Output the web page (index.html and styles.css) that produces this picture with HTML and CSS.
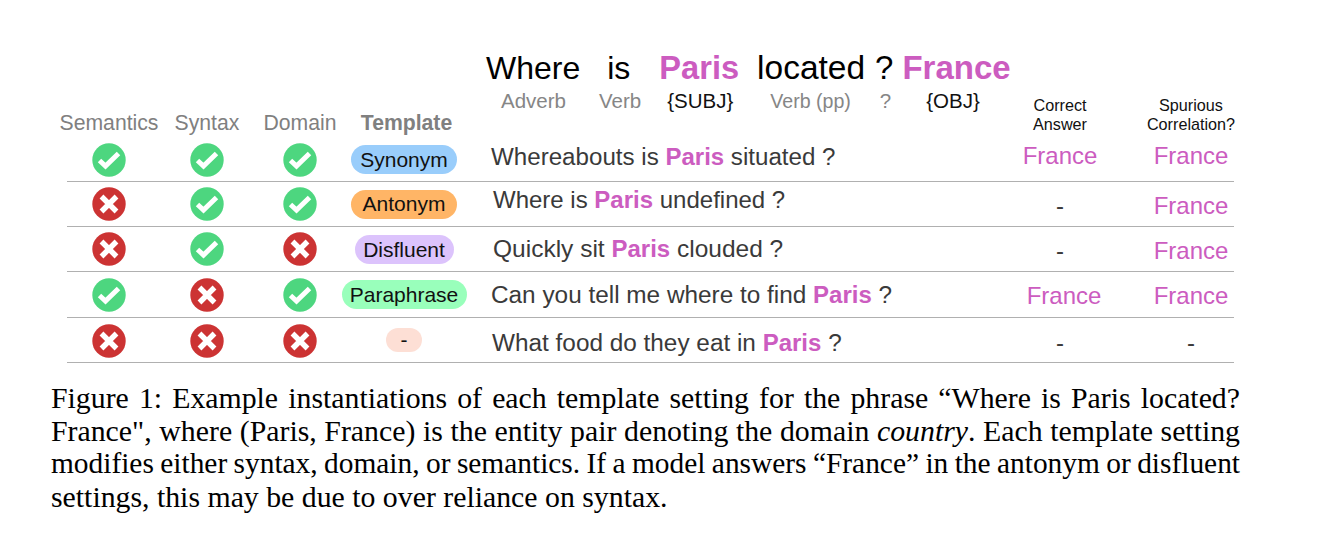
FILE: index.html
```html
<!DOCTYPE html>
<html lang="en">
<head>
<meta charset="utf-8">
<title>Figure 1</title>
<link rel="stylesheet" href="styles.css">
</head>
<body>
<svg class="defs" width="0" height="0" aria-hidden="true">
  <symbol id="yes" viewBox="0 0 34 34"><circle cx="17" cy="17" r="16.7" fill="#4dd67f"/><path d="M7.5 17.5l6 5.5L26.5 10.5" fill="none" stroke="#fff" stroke-width="5"/></symbol>
  <symbol id="no" viewBox="0 0 34 34"><circle cx="17" cy="17" r="16.7" fill="#cc3333"/><path d="M9.5 9.5l15 15M24.5 9.5l-15 15" fill="none" stroke="#fff" stroke-width="5.4"/></symbol>
</svg>
<main class="page">
  <figure class="figure">
    <div class="headline">
      <span class="w-where">Where</span>
      <span class="w-is">is</span>
      <b class="hl w-paris">Paris</b>
      <span class="w-located">located</span>
      <span class="w-q">?</span>
      <b class="hl w-france">France</b>
    </div>
    <div class="row head">
      <div class="label">Semantics</div>
      <div class="label">Syntax</div>
      <div class="label">Domain</div>
      <div class="label strong">Template</div>
      <div class="parts">
        <span class="p-adverb">Adverb</span>
        <span class="p-verb">Verb</span>
        <span class="p-subj dark">{SUBJ}</span>
        <span class="p-pp">Verb (pp)</span>
        <span class="p-q">?</span>
        <span class="p-obj dark">{OBJ}</span>
      </div>
      <div class="small">Correct<br>Answer</div>
      <div class="small">Spurious<br>Correlation?</div>
    </div>

    <div class="row r1">
      <svg class="ico"><use href="#yes"/></svg>
      <svg class="ico"><use href="#yes"/></svg>
      <svg class="ico"><use href="#yes"/></svg>
      <span class="pill blue">Synonym</span>
      <div class="sent">Whereabouts is <b class="hl">Paris</b> situated ?</div>
      <div class="ans hl2">France</div>
      <div class="ans hl2">France</div>
    </div>
    <div class="row r2">
      <svg class="ico"><use href="#no"/></svg>
      <svg class="ico"><use href="#yes"/></svg>
      <svg class="ico"><use href="#yes"/></svg>
      <span class="pill orange">Antonym</span>
      <div class="sent">Where is <b class="hl">Paris</b> undefined ?</div>
      <div class="ans">-</div>
      <div class="ans hl2">France</div>
    </div>
    <div class="row r3">
      <svg class="ico"><use href="#no"/></svg>
      <svg class="ico"><use href="#yes"/></svg>
      <svg class="ico"><use href="#no"/></svg>
      <span class="pill purple">Disfluent</span>
      <div class="sent">Quickly sit <b class="hl">Paris</b> clouded ?</div>
      <div class="ans">-</div>
      <div class="ans hl2">France</div>
    </div>
    <div class="row r4">
      <svg class="ico"><use href="#yes"/></svg>
      <svg class="ico"><use href="#no"/></svg>
      <svg class="ico"><use href="#yes"/></svg>
      <span class="pill green">Paraphrase</span>
      <div class="sent">Can you tell me where to find <b class="hl">Paris</b> ?</div>
      <div class="ans hl2">France</div>
      <div class="ans hl2">France</div>
    </div>
    <div class="row r5">
      <svg class="ico"><use href="#no"/></svg>
      <svg class="ico"><use href="#no"/></svg>
      <svg class="ico"><use href="#no"/></svg>
      <span class="pill peach">-</span>
      <div class="sent">What food do they eat in <b class="hl">Paris</b> ?</div>
      <div class="ans">-</div>
      <div class="ans">-</div>
    </div>
  </figure>
  <p class="caption"><span class="line">Figure 1: Example instantiations of each template setting for the phrase “Where is Paris located?</span><span class="line">France", where (Paris, France) is the entity pair denoting the domain <i>country</i>. Each template setting</span><span class="line tight">modifies either syntax, domain, or semantics. If a model answers “France” in the antonym or disfluent</span><span class="line last">settings, this may be due to over reliance on syntax.</span></p>
</main>
</body>
</html>
```
FILE: styles.css
```css
* { box-sizing: border-box; }
html, body { margin: 0; padding: 0; background: #fff; }
body { font-family: "Liberation Sans", Arial, sans-serif; color: #111; overflow: hidden; }
.defs { display: block; height: 0; }
.page { width: 1325px; height: 559px; padding-top: 49px; }
.figure { margin: 0 0 0 67px; width: 1167px; }

.headline { display: flex; height: 38px; align-items: center; padding-left: 419px; font-size: 32px; color: #000; white-space: nowrap; }
.w-is { margin-left: 27px; }
.w-paris { margin-left: 29px; font-size: 32.6px; }
.w-located { margin-left: 18px; font-size: 33.5px; }
.w-q { margin-left: 10px; font-size: 33px; }
.w-france { margin-left: 9px; font-size: 33px; }
.hl { color: #cc5cc0; font-weight: 700; }
.hl2 { color: #cc5cc0; }

.row {
  display: grid;
  grid-template-columns: 84px 112px 74px 134px 501px 176px 86px;
  align-items: center;
  justify-items: center;
  height: 45px;
  border-bottom: 1px solid #b0b0b0;
}
.head { height: 51px; border-bottom: 0; align-items: start; }
.label { font-size: 21.2px; color: #808080; margin-top: 24px; white-space: nowrap; }
.strong { font-weight: 700; margin-left: 5px; }
.parts { justify-self: start; display: flex; font-size: 20.5px; color: #868686; white-space: nowrap; padding: 2px 0 0 30px; }
.dark { color: #111; }
.p-verb { margin-left: 33px; }
.p-subj { margin-left: 26px; }
.p-pp { margin-left: 37px; font-size: 19.6px; align-self: center; }
.p-q { margin-left: 29px; }
.p-obj { margin-left: 35px; }
.small { font-size: 16.2px; line-height: 19px; text-align: center; color: #111; white-space: nowrap; margin-top: 9px; }

.ico { width: 34px; height: 34px; display: block; }
.pill { height: 29px; line-height: 29px; border-radius: 15px; font-size: 21px; color: #111; white-space: nowrap; text-align: center; }
.blue { background: #99cdfb; width: 106px; }
.orange { background: #ffb566; width: 106px; line-height: 28px; }
.purple { background: #dcc3fc; width: 99px; }
.green { background: #99ffbb; width: 125px; }
.peach { background: #fddfd5; width: 36px; height: 24px; line-height: 24px; }
.sent { justify-self: start; font-size: 24.35px; color: #3a3a3a; white-space: nowrap; padding-left: 20px; }
.sent .hl { font-size: 24px; }
.ans { font-size: 24px; color: #3a3a3a; }
.ans.hl2 { color: #cc5cc0; }

.r1 { height: 44px; }
.r1 .sent { margin-top: -6px; font-size: 24.15px; }
.r1 .ans { margin-top: -8px; }
.r2 .sent { margin-top: -8px; padding-left: 22px; font-size: 24px; }
.r2 .ans { margin-top: 4px; }
.r3 .sent { padding-left: 22px; font-size: 24.5px; }
.r3 .ans { margin-top: 4px; }
.r4 { height: 46px; }
.r4 .sent { margin-top: 1px; }
.r4 .ans { margin-top: 3px; }
.r4 .ans:nth-last-child(2) { margin-left: 8px; }
.r5 .sent { margin-top: 6px; padding-left: 21px; }
.r5 .ans { margin-top: 6px; }
.r5 .ico { margin-top: 2px; }

.caption {
  margin: 18px 0 0 51px;
  width: 1189px;
  font-family: "Liberation Serif", "Times New Roman", serif;
  font-size: 29.8px;
  line-height: 33px;
  color: #000;
}
.line { display: block; text-align: justify; text-align-last: justify; white-space: nowrap; }
.tight { font-size: 29.4px; word-spacing: -1.2px; }
.last { text-align-last: left; }
```
